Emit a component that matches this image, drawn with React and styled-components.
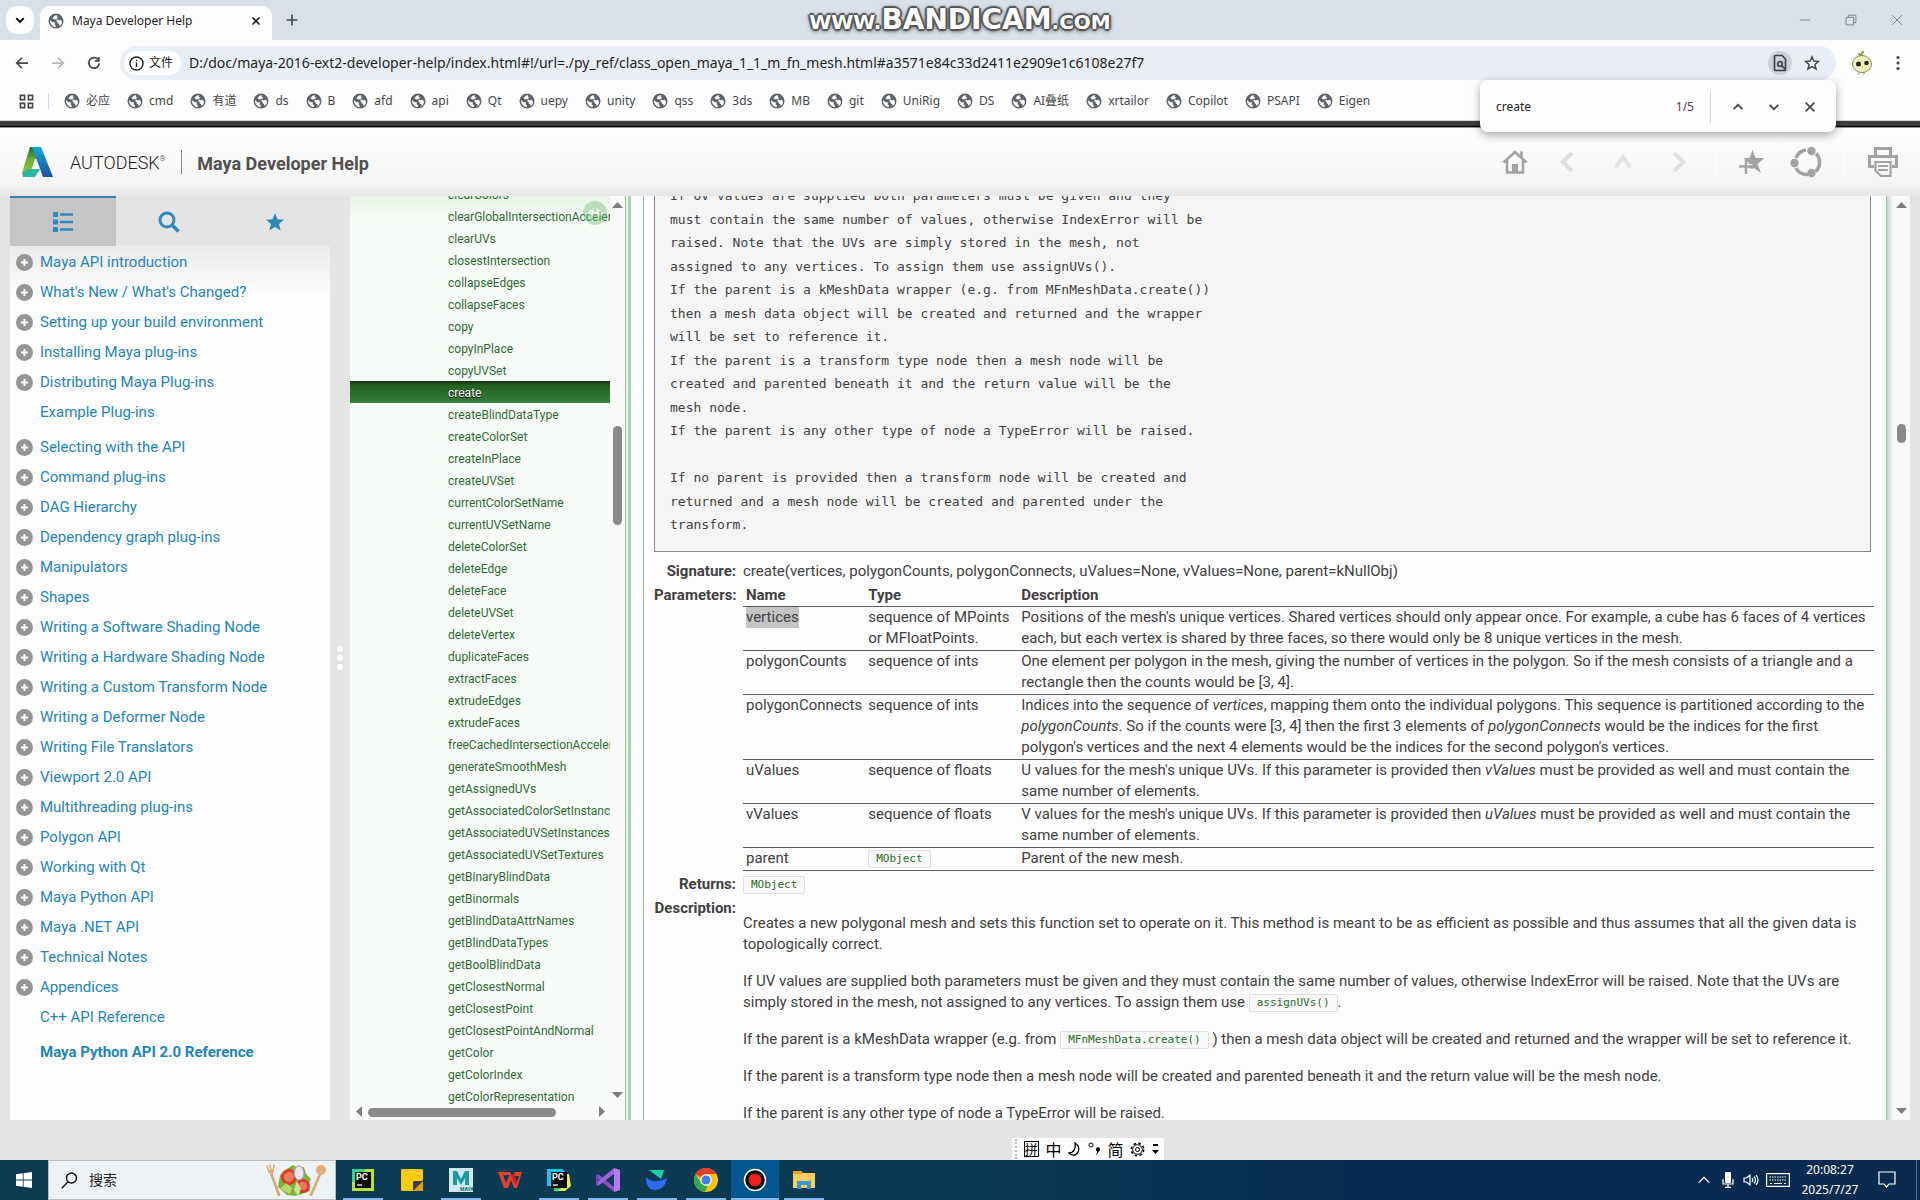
import styled, { createGlobalStyle, css } from "styled-components";

const ui = `"Noto Sans", "Noto Sans CJK SC", sans-serif`;
const mono = `"DejaVu Sans Mono", monospace`;

const GlobalStyle = createGlobalStyle`
  * { box-sizing: border-box; }
  body {
    margin: 0;
    font-family: Roboto, "Noto Sans CJK SC", sans-serif;
    background: #e4e4e4;
  }
  button { border: 0; padding: 0; background: none; font: inherit; color: inherit; cursor: pointer; }
  a { text-decoration: none; color: inherit; }
  svg { display: block; }
`;

const Screen = styled.div`
  height: 100vh;
  display: flex;
  flex-direction: column;
  overflow: hidden;
`;

/* ---------- browser chrome ---------- */

const TabStrip = styled.div`
  height: 40px;
  flex-shrink: 0;
  display: flex;
  align-items: flex-end;
  padding-left: 6px;
  background: #dae0e9;
  position: relative;
`;

const TabSearch = styled.button`
  width: 28px;
  height: 28px;
  margin: 0 6px 6px 0;
  border-radius: 10px;
  background: #fdfdfd;
  display: flex;
  align-items: center;
  justify-content: center;
`;

const Tab = styled.div`
  width: 232px;
  height: 34px;
  padding: 0 8px 4px;
  border-radius: 10px 10px 0 0;
  background: #fdfdfd;
  display: flex;
  align-items: center;
  gap: 8px;
  font: 12px/20px ${ui};
  color: #1f1f1f;

  span { flex: 1; }
`;

const IconButton = styled.button`
  width: ${(p) => p.$w || 24}px;
  height: ${(p) => p.$h || 24}px;
  flex-shrink: 0;
  display: flex;
  align-items: center;
  justify-content: center;
  border-radius: 12px;
  color: ${(p) => p.$color || "#45484b"};
  background: ${(p) => p.$bg || "transparent"};
`;

const NewTab = styled(IconButton)`
  margin: 0 0 8px 8px;
`;

const WindowControls = styled.div`
  margin-left: auto;
  display: flex;
  height: 40px;
  align-items: center;
`;

const Watermark = styled.div`
  position: absolute;
  left: 50%;
  top: 3px;
  transform: translateX(-50%);
  font: bold 28px/34px "DejaVu Sans", sans-serif;
  color: #fff;
  white-space: nowrap;
  text-shadow: -2px 0 1px #555, 2px 0 1px #555, 0 -2px 1px #555, 0 2px 1px #555,
    -1px -1px 1px #555, 1px 1px 1px #555, 0 0 4px #666, 0 2px 5px #666;

  small { font-size: 20px; text-transform: uppercase; }
`;

const Toolbar = styled.div`
  height: 40px;
  flex-shrink: 0;
  display: flex;
  align-items: center;
  padding: 6px 10px 0;
  background: #fdfdfd;
`;

const NavButtons = styled.div`
  display: flex;
  gap: 12px;
  width: 110px;
`;

const Omnibox = styled.div`
  flex: 1;
  height: 34px;
  display: flex;
  align-items: center;
  gap: 8px;
  padding: 0 12px 0 4px;
  border-radius: 17px;
  background: #e9eef6;
`;

const SchemeChip = styled.button`
  height: 24px;
  display: flex;
  align-items: center;
  gap: 5px;
  padding: 0 8px 0 5px;
  border-radius: 12px;
  background: #fdfdfd;
  font: 12px/20px ${ui};
  color: #1f1f1f;
`;

const UrlInput = styled.input`
  flex: 1;
  min-width: 0;
  border: 0;
  outline: 0;
  padding: 0;
  background: transparent;
  font: 14px/24px ${ui};
  color: #1f1f1f;
`;

const ProfileArea = styled.div`
  display: flex;
  align-items: center;
  gap: 12px;
  padding-left: 14px;
`;

const BookmarkBar = styled.nav`
  height: 41px;
  flex-shrink: 0;
  display: flex;
  align-items: center;
  padding: 2px 0 0 19px;
  border-bottom: 1px solid #d5d5d5;
  background: #fdfdfd;
`;

const Separator = styled.i`
  width: ${(p) => p.$w || 1}px;
  height: ${(p) => p.$h}px;
  background: ${(p) => p.$color};
`;

const BookmarkList = styled.div`
  display: flex;
  gap: 17px;
  padding-left: 15px;
`;

const Bookmark = styled.a`
  display: flex;
  align-items: center;
  gap: 6px;
  font: 12px/20px ${ui};
  color: #45484b;
  white-space: nowrap;
`;

const FindBar = styled.form`
  position: absolute;
  z-index: 5;
  top: 80px;
  right: 84px;
  width: 356px;
  height: 52px;
  padding: 2px 14px 0 16px;
  display: flex;
  align-items: center;
  border-radius: 8px;
  background: #fdfdfd;
  box-shadow: 0 3px 10px rgba(0, 0, 0, 0.35);
  font: 12px/20px ${ui};
  color: #45484b;

  input { flex: 1; min-width: 0; border: 0; outline: 0; padding: 0; font: inherit; color: #1f1f1f; background: none; }
  output { margin-right: 16px; }
  i { margin-right: 15px; }
  button + button { margin-left: 12px; }
`;

/* ---------- help site ---------- */

const SiteHeader = styled.header`
  height: 75px;
  flex-shrink: 0;
  display: flex;
  align-items: center;
  padding: 2px 21px 0 20px;
  border-top: 5px solid #3c3c3c;
  box-shadow: inset 0 1px 0 #000, inset 0 2px 0 #999;
  background: linear-gradient(#fdfdfd 20%, #f4f4f4 85%, #e6e6e6);
`;

const Brand = styled.span`
  padding: 0 16px;
  font-size: 18px;
  font-weight: 300;
  color: #222;

  sup { font-size: 7px; vertical-align: 8px; line-height: 0; }
`;

const SiteTitle = styled.h1`
  margin: 0 auto 0 15px;
  padding-top: 3px;
  font-size: 18px;
  line-height: 24px;
  font-weight: 700;
  color: #505050;
`;

const HeaderTools = styled.div`
  display: flex;
  align-items: center;
  color: #a2a2a2;
`;

const Workspace = styled.main`
  flex: 1;
  min-height: 0;
  display: flex;
  padding: 0 10px 40px;
  background: #e4e4e4;
`;

const Sidebar = styled.aside`
  width: 320px;
  flex-shrink: 0;
  display: flex;
  flex-direction: column;
`;

const SideTabs = styled.div`
  height: 50px;
  flex-shrink: 0;
  display: flex;
`;

const SideTab = styled.button`
  width: 106px;
  border-top: 2px solid transparent;
  display: flex;
  align-items: center;
  justify-content: center;
  color: #2e88ba;
  ${(p) =>
    p.$active &&
    css`
      background: #c5c5c5;
      border-color: #3a7da6;
    `}
`;

const Toc = styled.ul`
  flex: 1;
  margin: 0;
  padding: 1px 0 0 6px;
  list-style: none;
  background: linear-gradient(#ebebeb, #fdfdfd 50px);
`;

const TocItem = styled.li`
  height: 30px;
  margin-bottom: ${(p) => (p.$leaf ? 5 : 0)}px;
  padding-left: ${(p) => (p.$leaf ? 24 : 0)}px;
  display: flex;
  align-items: center;
  gap: 7px;
  font-size: 15px;
  font-weight: ${(p) => (p.$bold ? 700 : 400)};
  color: #1f85bb;
`;

const Splitter = styled.div`
  width: 20px;
  flex-shrink: 0;
  display: flex;
  flex-direction: column;
  align-items: center;
  justify-content: center;
  gap: 3px;

  i { width: 6px; height: 6px; border-radius: 3px; background: #fff; }
`;

const NavPane = styled.nav`
  width: 275px;
  flex-shrink: 0;
  display: grid;
  grid-template: minmax(0, 1fr) 16px / minmax(0, 1fr) 15px;
  background: #fafafa;
  position: relative;
`;

const NavList = styled.ul`
  margin: 0;
  padding: 0;
  list-style: none;
  overflow: hidden;
  background: linear-gradient(#e6f4e6, #f7fbf7 24px);

  li:first-child { margin-top: -13px; }
`;

const NavItem = styled.li`
  height: 22px;
  padding-left: 98px;
  font-size: 12px;
  line-height: 24px;
  white-space: nowrap;
  color: #2f6b34;
  ${(p) =>
    p.$active &&
    css`
      color: #fff;
      text-shadow: 0 1px 1px #000;
      background: linear-gradient(#12380f, #255f22 20%, #34803a);
    `}
`;

const SyncButton = styled.button`
  position: absolute;
  top: 5px;
  right: 18px;
  opacity: 0.4;
`;

const Track = styled.div`
  min-width: ${(p) => p.$width || 15}px;
  display: flex;
  flex-direction: ${(p) => (p.$horizontal ? "row" : "column")};
  align-items: center;
  justify-content: space-between;
  padding: ${(p) => (p.$horizontal ? "0 3px" : "3px 0")};
  background: #fafafa;
`;

const Rail = styled.div`
  flex: 1;
  align-self: stretch;
  display: flex;
  flex-direction: ${(p) => (p.$horizontal ? "row" : "column")};
  align-items: center;
  padding: ${(p) => (p.$horizontal ? `0 0 0 ${p.$start}px` : `${p.$start}px 0 0`)};

  i {
    width: ${(p) => (p.$horizontal ? p.$size : 9)}px;
    height: ${(p) => (p.$horizontal ? 9 : p.$size)}px;
    border-radius: 5px;
    background: #8a8a8a;
  }
`;

const GreenSplit = styled.div`
  width: 6px;
  flex-shrink: 0;
  border-left: 1px solid #8fc492;
  background: linear-gradient(90deg, #eaf7ea 30%, #8ecf93 60%, #b5e0b8);
`;

const DocFrame = styled.div`
  flex: 1;
  min-width: 0;
  display: flex;
  padding-left: 12px;
  background: #fdfdfd;
`;

const Doc = styled.article`
  flex: 1;
  min-width: 0;
  overflow: hidden;
  padding: 0 12px 0 10px;
  border: solid #9cc59f;
  border-width: 0 1px;
  font-size: 15px;
  line-height: 21px;
  color: #414141;
`;

const Edge = styled.div`
  width: 6px;
  background: linear-gradient(90deg, #cfd6d0, #f5f5f5);
`;

const CodeBlock = styled.pre`
  margin: -12px 3px 9px 0;
  padding: 0 15px 14px;
  border: 1px solid #858585;
  border-top: 0;
  background: #f5f5f5;
  font: 13px/23px ${mono};

  /* rows alternate 24 and 23 to keep a rhythm of 47 for each pair */
  span { display: block; height: 23px; }
  span:nth-child(odd) { height: 24px; }
`;

const Fields = styled.dl`
  margin: 0;
  display: grid;
  grid-template-columns: 82px minmax(0, 1fr);
  gap: 3px 7px;

  dt { font-weight: 700; text-align: right; }
  dd { margin: 0; }
  p { margin: 15px 10px 0 0; }
  p + p { margin-top: 16px; }
`;

const ParamTable = styled.table`
  width: 100%;
  border-collapse: collapse;
  text-align: left;

  th, td { padding: 0 3px; vertical-align: top; border-bottom: 1px solid #5c5c5c; }
  td { padding-bottom: 1px; }
  th:first-child { width: 122px; }
  th:nth-child(2) { width: 153px; }
  mark { display: inline-block; background: #c4c4c4; color: inherit; }
`;

const Chip = styled.code`
  display: inline-block;
  height: 18px;
  padding: 0 7px;
  border: 1px solid #dfdfdf;
  border-radius: 2px;
  background: #f8f8f8;
  font: 11px/16px ${mono};
  color: #2b6c2e;
  vertical-align: middle;
`;

/* ---------- desktop ---------- */

const ImeBar = styled.div`
  position: absolute;
  left: 1012px;
  bottom: 40px;
  height: 22px;
  width: 152px;
  display: flex;
  align-items: center;
  justify-content: space-between;
  padding: 0 5px 0 3px;
  background: #fdfdfd;
  font: 16px/20px "Noto Sans CJK SC", sans-serif;
  color: #000;

  b { font-size: 13px; font-weight: 400; line-height: 14px; border: 1px solid #000; }
`;

const Grip = styled.i`
  height: 20px;
  border-left: 2px dotted #bbb;
`;

const Taskbar = styled.footer`
  height: 40px;
  flex-shrink: 0;
  display: flex;
  background: linear-gradient(90deg, #0d3b54 0%, #0b3852 50%, #052950 75%, #0a2b50);
  color: #fff;
`;

const StartButton = styled.button`
  width: 48px;
  display: flex;
  align-items: center;
  justify-content: center;
`;

const SearchBox = styled.label`
  width: 288px;
  display: flex;
  align-items: center;
  padding: 0 8px 0 12px;
  border: 1px solid #b9bcbe;
  background: #eff2f4;

  input {
    flex: 1;
    min-width: 0;
    border: 0;
    outline: 0;
    padding: 0 0 0 11px;
    background: none;
    font: 14px/20px ${ui};
  }
  input::placeholder { color: #222; opacity: 1; }
`;

const Apps = styled.div`
  display: flex;
  gap: 1px;
  padding-left: 3px;
`;

const AppButton = styled.button`
  width: 48px;
  display: flex;
  align-items: center;
  justify-content: center;
  background:
    ${(p) => (p.$running ? `linear-gradient(#83b9ea, #83b9ea) center bottom / ${p.$active ? 48 : 40}px 2px no-repeat` : "none")}
    ${(p) => (p.$active ? "#045690" : "transparent")};
`;

const Tray = styled.div`
  margin-left: auto;
  display: flex;
  align-items: center;
  padding-right: 3px;
`;

const Clock = styled.time`
  width: 74px;
  margin-right: 4px;
  font: 12px/20px ${ui};
  text-align: center;

  span { display: block; }
`;

const Globe = ({ size = 16 }) => (
  <svg width={size} height={size} viewBox="0 0 16 16">
    <circle cx="8" cy="8" r="7.5" fill="#5f6368" />
    <path fill="#fdfdfd" d="M8.800 2 6.200 3 4.500 5.200l2 1.200 2.300-.5 1.500-1.500-1.400-.4ZM2 7.200l2.700 2 2.100.1v2.300l1 .7v1.700C4.500 14 1.900 11 2 7.200Zm6.900-.9 1.900.9 1.700-.5 1.500 1.700c0 2-1 3.600-2.500 4.600l-.2-2-1.600-.5V9.300L8.300 8.200Z" />
  </svg>
);

const Stroke = ({ d, size = 16, w = 1.8, view = 16 }) => (
  <svg width={size} height={size} viewBox={`0 0 ${view} ${view}`} fill="none" stroke="currentColor" strokeWidth={w}>
    <path d={d} />
  </svg>
);

const Triangle = ({ dir }) => {
  const paths = { up: "M0 9 5.500 3 11 9Z", down: "M0 3 5.500 9 11 3Z", left: "M3 5.500 9 0V11Z", right: "M9 5.500 3 0V11Z" };
  return (
    <svg width="11" height="12" viewBox="0 0 11 12" fill="#7d7d7d">
      <path d={paths[dir]} />
    </svg>
  );
};

const Scrollbar = ({ horizontal, start, size, width }) => (
  <Track $horizontal={horizontal} $width={width}>
    <Triangle dir={horizontal ? "left" : "up"} />
    <Rail $horizontal={horizontal} $start={start} $size={size}>
      <i />
    </Rail>
    <Triangle dir={horizontal ? "right" : "down"} />
  </Track>
);

const Plus = () => (
  <svg width="17" height="17" viewBox="0 0 17 17">
    <circle cx="8.500" cy="8.500" r="8.500" fill="#959595" />
    <path d="M8.500 5v7M5 8.500h7" stroke="#fff" strokeWidth="2" />
  </svg>
);

const bookmarks = [
  "必应", "cmd", "有道", "ds", "B", "afd", "api", "Qt", "uepy", "unity", "qss", "3ds", "MB", "git",
  "UniRig", "DS", "AI叠纸", "xrtailor", "Copilot", "PSAPI", "Eigen",
];

const toc = [
  "Maya API introduction", "What's New / What's Changed?", "Setting up your build environment",
  "Installing Maya plug-ins", "Distributing Maya Plug-ins", "Example Plug-ins", "Selecting with the API",
  "Command plug-ins", "DAG Hierarchy", "Dependency graph plug-ins", "Manipulators", "Shapes",
  "Writing a Software Shading Node", "Writing a Hardware Shading Node", "Writing a Custom Transform Node",
  "Writing a Deformer Node", "Writing File Translators", "Viewport 2.0 API", "Multithreading plug-ins",
  "Polygon API", "Working with Qt", "Maya Python API", "Maya .NET API", "Technical Notes", "Appendices",
];

const members = [
  "clearColors", "clearGlobalIntersectionAcceleratorInfo", "clearUVs", "closestIntersection", "collapseEdges",
  "collapseFaces", "copy", "copyInPlace", "copyUVSet", "create", "createBlindDataType", "createColorSet",
  "createInPlace", "createUVSet", "currentColorSetName", "currentUVSetName", "deleteColorSet", "deleteEdge",
  "deleteFace", "deleteUVSet", "deleteVertex", "duplicateFaces", "extractFaces", "extrudeEdges", "extrudeFaces",
  "freeCachedIntersectionAccelerator", "generateSmoothMesh", "getAssignedUVs", "getAssociatedColorSetInstances",
  "getAssociatedUVSetInstances", "getAssociatedUVSetTextures", "getBinaryBlindData", "getBinormals",
  "getBlindDataAttrNames", "getBlindDataTypes", "getBoolBlindData", "getClosestNormal", "getClosestPoint",
  "getClosestPointAndNormal", "getColor", "getColorIndex", "getColorRepresentation",
];

const docLines = [
  "If UV values are supplied both parameters must be given and they",
  "must contain the same number of values, otherwise IndexError will be",
  "raised. Note that the UVs are simply stored in the mesh, not",
  "assigned to any vertices. To assign them use assignUVs().",
  "If the parent is a kMeshData wrapper (e.g. from MFnMeshData.create())",
  "then a mesh data object will be created and returned and the wrapper",
  "will be set to reference it.",
  "If the parent is a transform type node then a mesh node will be",
  "created and parented beneath it and the return value will be the",
  "mesh node.",
  "If the parent is any other type of node a TypeError will be raised.",
  "",
  "If no parent is provided then a transform node will be created and",
  "returned and a mesh node will be created and parented under the",
  "transform.",
];

const params = [
  [<mark>vertices</mark>, "sequence of MPoints or MFloatPoints.", "Positions of the mesh's unique vertices. Shared vertices should only appear once. For example, a cube has 6 faces of 4 vertices each, but each vertex is shared by three faces, so there would only be 8 unique vertices in the mesh."],
  ["polygonCounts", "sequence of ints", "One element per polygon in the mesh, giving the number of vertices in the polygon. So if the mesh consists of a triangle and a rectangle then the counts would be [3, 4]."],
  ["polygonConnects", "sequence of ints", <>Indices into the sequence of <em>vertices</em>, mapping them onto the individual polygons. This sequence is partitioned according to the <em>polygonCounts</em>. So if the counts were [3, 4] then the first 3 elements of <em>polygonConnects</em> would be the indices for the first polygon's vertices and the next 4 elements would be the indices for the second polygon's vertices.</>],
  ["uValues", "sequence of floats", <>U values for the mesh's unique UVs. If this parameter is provided then <em>vValues</em> must be provided as well and must contain the same number of elements.</>],
  ["vValues", "sequence of floats", <>V values for the mesh's unique UVs. If this parameter is provided then <em>uValues</em> must be provided as well and must contain the same number of elements.</>],
  ["parent", <Chip>MObject</Chip>, "Parent of the new mesh."],
];

const Browser = () => (
  <>
    <TabStrip>
      <TabSearch aria-label="Search tabs">
        <Stroke size={12} d="M3 5.500 8 10.500 13 5.500" w={2.4} />
      </TabSearch>
      <Tab>
        <Globe />
        <span>Maya Developer Help</span>
        <IconButton $w={16} $h={16} $color="#222" aria-label="Close tab">
          <Stroke size={14} d="M4 4 12 12M12 4 4 12" w={2} />
        </IconButton>
      </Tab>
      <NewTab aria-label="New tab">
        <Stroke d="M8 2.500V13.500M2.500 8H13.500" w={1.7} />
      </NewTab>
      <Watermark>
        <small>www.</small>BANDICAM<small>.com</small>
      </Watermark>
      <WindowControls>
        <IconButton $w={46} $color="#7d8288" aria-label="Minimize"><Stroke size={12} d="M1 8H15" w={1.3} /></IconButton>
        <IconButton $w={46} $color="#7d8288" aria-label="Restore"><Stroke size={12} d="M1.500 4.500h10v10h-10zM4.500 4V1.500h10v10H12" w={1.3} /></IconButton>
        <IconButton $w={46} $color="#7d8288" aria-label="Close"><Stroke size={12} d="M1.500 1.500l13 13M14.500 1.500l-13 13" w={1.3} /></IconButton>
      </WindowControls>
    </TabStrip>
    <Toolbar>
      <NavButtons>
        <IconButton aria-label="Back"><Stroke size={14} d="M15 8H2.500M8 2 2 8l6 6" w={2} /></IconButton>
        <IconButton $color="#b4b6b8" aria-label="Forward"><Stroke size={14} d="M1 8h12.500M8 2l6 6-6 6" w={2} /></IconButton>
        <IconButton aria-label="Reload"><Stroke size={14} d="M13 4.500A6 6 0 1 0 14 8.500M13.500 1v4.500H9" w={2} /></IconButton>
      </NavButtons>
      <Omnibox>
        <SchemeChip>
          <svg width="15" height="15" viewBox="0 0 16 16" fill="none" stroke="#222" strokeWidth="1.500">
            <circle cx="8" cy="8" r="7" />
            <path d="M8 7v5M8 4v1.600" />
          </svg>
          文件
        </SchemeChip>
        <UrlInput
          aria-label="Address"
          defaultValue="D:/doc/maya-2016-ext2-developer-help/index.html#!/url=./py_ref/class_open_maya_1_1_m_fn_mesh.html#a3571e84c33d2411e2909e1c6108e27f7"
        />
        <IconButton $bg="#cdd2da" aria-label="Find in page">
          <svg width="16" height="18" viewBox="0 0 16 18" fill="none" stroke="#3c4043" strokeWidth="1.700">
            <path d="M10 1.500H3.500a1 1 0 0 0-1 1v13a1 1 0 0 0 1 1h9a1 1 0 0 0 1-1V5Z" />
            <circle cx="8" cy="10" r="2.300" />
            <path d="m9.500 11.500 3.500 3.500" />
          </svg>
        </IconButton>
        <IconButton aria-label="Bookmark this page">
          <Stroke d="M8 1.800l1.800 4.300 4.600.4-3.500 3 1.100 4.500L8 11.600 4 14l1.100-4.500-3.500-3 4.600-.4Z" w={1.5} />
        </IconButton>
      </Omnibox>
      <ProfileArea>
        <IconButton aria-label="Profile">
          <svg width="22" height="24" viewBox="0 0 22 24">
            <path d="M11 5c-1-3 0-4 2-4M11 4c-2 0-3-1-3-2" stroke="#6d8a35" strokeWidth="1.400" fill="none" />
            <ellipse cx="11" cy="13" rx="9.500" ry="8.500" fill="#f0efb5" stroke="#8c8a68" />
            <path d="M8 21v2.500M13 21v2.500" stroke="#8c8a68" />
            <circle cx="7.500" cy="13" r="2.500" fill="#2c241c" />
            <circle cx="15.500" cy="12" r="2.300" fill="#2c241c" />
            <path d="m11 15 1.500 0-.7 2Z" fill="#d99b3e" />
          </svg>
        </IconButton>
        <IconButton aria-label="Menu">
          <svg width="4" height="16" viewBox="0 0 4 16" fill="#45484b">
            <circle cx="2" cy="2.500" r="1.600" /><circle cx="2" cy="8" r="1.600" /><circle cx="2" cy="13.500" r="1.600" />
          </svg>
        </IconButton>
      </ProfileArea>
    </Toolbar>
    <BookmarkBar>
      <IconButton $w={15} $h={16} aria-label="Apps">
        <Stroke size={15} d="M1.500 1.500h4.500v4.500h-4.500zM10 1.500h4.500v4.500H10zM1.500 10h4.500v4.500h-4.500zM10 10h4.500v4.500H10z" w={1.7} />
      </IconButton>
      <Separator $h={16} $w={14} $color="transparent" />
      <Separator $h={16} $color="#c5daf5" />
      <BookmarkList>
        {bookmarks.map((name) => (
          <Bookmark href="#" key={name}>
            <Globe />
            {name}
          </Bookmark>
        ))}
      </BookmarkList>
    </BookmarkBar>
    <FindBar>
      <input aria-label="Find in page" defaultValue="create" />
      <output>1/5</output>
      <Separator $h={32} $color="#c5daf5" />
      <IconButton type="button" aria-label="Previous"><Stroke size={14} d="M3 10.500l5-5 5 5" w={2} /></IconButton>
      <IconButton type="button" aria-label="Next"><Stroke size={14} d="M3 5.500l5 5 5-5" w={2} /></IconButton>
      <IconButton type="button" aria-label="Close find bar"><Stroke size={14} d="M3 3l10 10M13 3 3 13" w={2} /></IconButton>
    </FindBar>
  </>
);

const Header = () => (
  <SiteHeader>
    <svg width="34" height="32" viewBox="0 0 34 32">
      <defs>
        <linearGradient id="leg" x1="0" y1="0" x2="0" y2="1">
          <stop offset="0" stopColor="#156b36" /><stop offset=".5" stopColor="#6fae3d" /><stop offset="1" stopColor="#8cc540" />
        </linearGradient>
        <linearGradient id="side" x1="0" y1="0" x2="0" y2="1">
          <stop offset="0" stopColor="#12a5e0" /><stop offset="1" stopColor="#1c4fa0" />
        </linearGradient>
      </defs>
      <path d="M10 1h7l3 10-5 2-5 14-8 0Z" fill="url(#leg)" />
      <path d="M2 27 8 23h12l-5 8H3Z" fill="#2bb5a0" />
      <path d="M12 1h9l12 30H23Z" fill="url(#side)" />
    </svg>
    <Brand>AUTODESK<sup>®</sup></Brand>
    <Separator $h={24} $color="#888" />
    <SiteTitle>Maya Developer Help</SiteTitle>
    <HeaderTools>
      <IconButton $w={48} $h={32} $color="#a2a2a2" aria-label="Home">
        <svg width="26" height="24" viewBox="0 0 26 24" fill="none" stroke="currentColor" strokeWidth="2.600">
          <path d="M1.500 12.500 13 2l11.500 10.500M5 10v12.500h16V10M19.500 1.500v6" />
          <path d="M10 14h6v8h-6z" fill="currentColor" stroke="none" />
        </svg>
      </IconButton>
      <IconButton $w={56} $h={32} $color="#dfdfdf" aria-label="Previous topic"><Stroke size={22} d="M11.500 1.500 5 8l6.500 6.500" w={3} /></IconButton>
      <IconButton $w={56} $h={32} $color="#e2e2e2" aria-label="Parent topic"><Stroke size={20} d="M2 12.500 8 4l6 8.500" w={3} /></IconButton>
      <IconButton $w={56} $h={32} $color="#dfdfdf" aria-label="Next topic"><Stroke size={22} d="M4.500 1.500 11 8l-6.500 6.500" w={3} /></IconButton>
      <Separator $h={28} $w={8} $color="transparent" />
      <Separator $h={28} $color="#fff" />
      <Separator $h={28} $w={9} $color="transparent" />
      <IconButton $w={54} $h={32} $color="#a2a2a2" aria-label="Add to favorites">
        <svg width="26" height="26" viewBox="0 0 26 26" fill="currentColor">
          <path d="m13.500 1 3 8h9l-7 6 3.500 9-6.500-4.500h-5V15H8L5 9h5.500Z" />
          <path d="M0 17.500h14M7 11v14" stroke="currentColor" strokeWidth="2.500" />
          <path d="M9 12.500v3h4.500" stroke="#f6f6f6" strokeWidth="1.200" fill="none" />
        </svg>
      </IconButton>
      <IconButton $w={54} $h={32} $color="#a2a2a2" aria-label="Share">
        <svg width="32" height="32" viewBox="0 0 32 32" fill="none" stroke="currentColor">
          <path d="M6 12A12.500 12.500 0 0 1 16 4M26 7.500A12.500 12.500 0 0 1 25.500 25.500M18 28.500A12.500 12.500 0 0 1 6 22" strokeWidth="3.600" />
          <g fill="currentColor" stroke="none">
            <circle cx="4.500" cy="17" r="4.200" /><circle cx="21.500" cy="5" r="4.200" /><circle cx="21.500" cy="27" r="4.200" />
          </g>
        </svg>
      </IconButton>
      <Separator $h={28} $w={11} $color="transparent" />
      <Separator $h={28} $color="#fff" />
      <Separator $h={28} $w={22} $color="transparent" />
      <IconButton $w={32} $h={32} $color="#a2a2a2" aria-label="Print">
        <svg width="30" height="32" viewBox="0 0 30 32" fill="none" stroke="currentColor" strokeWidth="3">
          <path d="M7.500 9V2.500h15V9" />
          <path d="M6 20.500H1.500V10.500h27v10H24" />
          <path d="M7.500 16h15v14H13l-5.500-5.500Z" strokeWidth="2.200" />
          <path d="M10 20h10M10 24h10" strokeWidth="1.800" />
        </svg>
      </IconButton>
    </HeaderTools>
  </SiteHeader>
);

const Contents = () => (
  <Sidebar>
    <SideTabs>
      <SideTab $active aria-label="Contents">
        <svg width="20" height="20" viewBox="0 0 20 20" fill="currentColor">
          <path d="M0 0h5v5H0zM0 7.500h5v5H0zM0 15h5v5H0zM7 1.300h13v2.400H7zM7 8.800h13v2.400H7zM7 16.300h13v2.400H7z" />
        </svg>
      </SideTab>
      <SideTab aria-label="Search">
        <svg width="22" height="22" viewBox="0 0 22 22" fill="none" stroke="currentColor">
          <circle cx="9" cy="9" r="7" strokeWidth="3" />
          <path d="m14 14 6.500 6.500" strokeWidth="3.600" />
        </svg>
      </SideTab>
      <SideTab aria-label="Favorites">
        <svg width="18" height="18" viewBox="0 0 18 18" fill="currentColor">
          <path d="m9 0 2.500 6.200 6.500.5-5 4.200 1.700 6.600L9 13.900l-5.700 3.600L5 10.900 0 6.700l6.500-.5Z" />
        </svg>
      </SideTab>
    </SideTabs>
    <Toc>
      {toc.map((label) => {
        const leaf = label === "Example Plug-ins";
        return (
          <TocItem key={label} $leaf={leaf}>
            {!leaf && <button aria-label={`Expand ${label}`}><Plus /></button>}
            <a href="#">{label}</a>
          </TocItem>
        );
      })}
      <TocItem $leaf><a href="#">C++ API Reference</a></TocItem>
      <TocItem $leaf $bold><a href="#">Maya Python API 2.0 Reference</a></TocItem>
    </Toc>
  </Sidebar>
);

const Members = () => (
  <NavPane>
    <NavList>
      {members.map((name) => (
        <NavItem key={name} $active={name === "create"}>
          <a href="#">{name}</a>
        </NavItem>
      ))}
    </NavList>
    <Scrollbar start={215} size={99} />
    <Scrollbar horizontal start={4} size={188} />
    <div />
    <SyncButton aria-label="Toggle sync">
      <svg width="24" height="24" viewBox="0 0 24 24">
        <circle cx="12" cy="12" r="12" fill="#6dbb70" />
        <path d="m4 12 6-5v3.500h4V7l6 5-6 5v-3.500h-4V17Z" fill="#fff" />
      </svg>
    </SyncButton>
  </NavPane>
);

const Reference = () => (
  <DocFrame>
    <Doc>
      <CodeBlock>
        {docLines.map((line, i) => (
          <span key={i}>{line}</span>
        ))}
      </CodeBlock>
      <Fields>
        <dt>Signature:</dt>
        <dd>create(vertices, polygonCounts, polygonConnects, uValues=None, vValues=None, parent=kNullObj)</dd>
        <dt>Parameters:</dt>
        <dd>
          <ParamTable>
            <thead>
              <tr><th>Name</th><th>Type</th><th>Description</th></tr>
            </thead>
            <tbody>
              {params.map(([name, type, text], i) => (
                <tr key={i}><td>{name}</td><td>{type}</td><td>{text}</td></tr>
              ))}
            </tbody>
          </ParamTable>
        </dd>
        <dt>Returns:</dt>
        <dd><Chip>MObject</Chip></dd>
        <dt>Description:</dt>
        <dd>
          <p>Creates a new polygonal mesh and sets this function set to operate on it. This method is meant to be as efficient as possible and thus assumes that all the given data is topologically correct.</p>
          <p>If UV values are supplied both parameters must be given and they must contain the same number of values, otherwise IndexError will be raised. Note that the UVs are simply stored in the mesh, not assigned to any vertices. To assign them use <Chip>assignUVs()</Chip>.</p>
          <p>If the parent is a kMeshData wrapper (e.g. from <Chip>MFnMeshData.create()</Chip> ) then a mesh data object will be created and returned and the wrapper will be set to reference it.</p>
          <p>If the parent is a transform type node then a mesh node will be created and parented beneath it and the return value will be the mesh node.</p>
          <p>If the parent is any other type of node a TypeError will be raised.</p>
        </dd>
      </Fields>
    </Doc>
    <Edge />
    <Scrollbar start={213} size={19} width={17} />
  </DocFrame>
);

const apps = [
  ["PyCharm Community", true, (
    <svg width="22" height="22" viewBox="0 0 22 22"><rect width="22" height="22" fill="#b6e334" /><path d="M0 0h14L0 14Z" fill="#35d38c" /><rect x="3" y="3" width="16" height="16" fill="#0a0a0a" /><text x="4" y="11" fontSize="9" fontWeight="700" fontFamily="Roboto" fill="#fff">PC</text><path d="M5 16h5" stroke="#fff" strokeWidth="1.300" /></svg>
  )],
  ["Sticky Notes", false, (
    <svg width="22" height="22" viewBox="0 0 22 22"><path d="M1 0h20l1 1v10L12 22H1l-1-1V1Z" fill="#fccb10" /><path d="M12 22V13l1-1h9v10Z" fill="#3b3d42" /><path d="M12 22 22 12v10Z" fill="#d9a200" /></svg>
  )],
  ["Maya", true, (
    <svg width="24" height="24" viewBox="0 0 24 24"><rect width="24" height="24" fill="#cfe9ec" /><path d="M4 17V3h4l4 8 4-8h4v14h-4v-7l-4 7-4-7v7Z" fill="#1b9aa5" /><text x="11" y="23" fontSize="5" fontWeight="700" fontFamily="Roboto" fill="#0e6f7a">MAYA</text></svg>
  )],
  ["WPS Office", false, (
    <svg width="24" height="16" viewBox="0 0 24 16"><path d="M0 0h12l2 3H5l3 8 4-9h4l3 8 2-6h-4l-1-4h8l-5 16h-3l-3-8-3 8H6Z" fill="#e8402c" /><path d="M12 2h4l3 8-1 3Z" fill="#b82c1c" /></svg>
  )],
  ["PyCharm", true, (
    <svg width="24" height="24" viewBox="0 0 24 24"><path d="M0 1h15l4 4-4 13H0Z" fill="#21c3f3" /><path d="M18 6h4l2 12-6 5H7Z" fill="#e9ee4a" /><path d="M2 15l8 9 4-4Z" fill="#22d88f" /><rect x="4" y="4" width="16" height="16" fill="#0a0a0a" /><text x="5" y="12" fontSize="9" fontWeight="700" fontFamily="Roboto" fill="#fff">PC</text><path d="M6 17h5" stroke="#fff" strokeWidth="1.300" /></svg>
  )],
  ["Visual Studio", true, (
    <svg width="24" height="24" viewBox="0 0 24 24"><path d="M18 0 24 2v20l-6 2Z" fill="#b57cf0" /><path d="M0 7l2-1 16 13v5L0 9Z" fill="#8a52c8" /><path d="M0 17l2 1L18 6V0L0 15Z" fill="#a065de" /><path d="M0 7l2-1v12l-2-1Z" fill="#7a44b8" /></svg>
  )],
  ["Thunder", true, (
    <svg width="24" height="22" viewBox="0 0 24 22"><path d="M4 1h15l-3 9Z" fill="#19cfa9" /><path d="M1 8c5 5 11 6 21 1-1 8-6 12-12 12C4 21 1 16 1 8Z" fill="#2e6bf0" /></svg>
  )],
  ["Chrome", true, (
    <svg width="24" height="24" viewBox="0 0 24 24"><circle cx="12" cy="12" r="12" fill="#fbc116" /><path d="M1.600 6A12 12 0 0 1 22.400 6H12a6 6 0 0 0-5.400 3.500Z" fill="#e33b2e" /><path d="M1.600 6 7 15a6 6 0 0 0 6.500 2.800L11 24A12 12 0 0 1 1.600 6Z" fill="#2da94f" /><circle cx="12" cy="12" r="5.800" fill="#fff" /><circle cx="12" cy="12" r="4.500" fill="#3d7fea" /></svg>
  )],
  ["Bandicam", true, (
    <svg width="24" height="24" viewBox="0 0 24 24"><circle cx="12" cy="12" r="10.500" fill="#0a0a0a" stroke="#fff" strokeWidth="1.500" /><circle cx="12" cy="12" r="6.500" fill="#f0201c" /></svg>
  )],
  ["Explorer", true, (
    <svg width="22" height="18" viewBox="0 0 22 18"><path d="M0 0h8l2 2h12v15H0Z" fill="#f9cf5b" /><path d="M0 0h8l2 2-1 1H0Z" fill="#e6a52a" /><path d="M4 18v-8h14v8h-4v-4H8v4Z" fill="#3f92d4" /></svg>
  )],
];

const Salad = () => (
  <svg width="62" height="34" viewBox="0 0 62 34">
    <g stroke="#d9a878" strokeLinecap="round">
      <path d="M6 10 14 32M56 9 46 32" strokeWidth="2.600" />
      <path d="M2 3l2 6M5 2l1 6M9 2 8 8" strokeWidth="1.500" />
    </g>
    <circle cx="56" cy="7" r="5" fill="#dfae80" />
    <path d="M3 7h6l-1 4H5Z" fill="#dfae80" />
    <path d="m13 24 2-12 7-6 6-4 5 3 6-1 2 7 5 5-3 6 2 6-8 3-7 2-8-1Z" fill="#7fb23c" />
    <circle cx="24" cy="14" r="8" fill="#d8402c" /><circle cx="24" cy="14" r="5" fill="#ee7a5c" />
    <circle cx="38" cy="23" r="7" fill="#d8402c" /><circle cx="38" cy="23" r="4" fill="#ee7a5c" />
    <ellipse cx="34" cy="10" rx="5" ry="7" fill="#f1e3ee" stroke="#b386ae" />
    <path d="m15 26 6-6 6 5-2 6Z" fill="#b6d96a" /><path d="m29 27 3-9 4 8-3 7Z" fill="#cfe58e" />
  </svg>
);

const Desktop = () => (
  <Taskbar>
    <StartButton aria-label="Start">
      <svg width="16" height="16" viewBox="0 0 16 16" fill="#fff">
        <path d="M0 2.300 6.800 1.300V7.600H0ZM7.600 1.200 16 0v7.600H7.600ZM0 8.400h6.800v6.300L0 13.700ZM7.600 8.400H16V16l-8.400-1.200Z" />
      </svg>
    </StartButton>
    <SearchBox>
      <svg width="17" height="17" viewBox="0 0 17 17" fill="none" stroke="#111" strokeWidth="1.400">
        <circle cx="10.500" cy="6" r="5" /><path d="M7 9.800.8 16.200" />
      </svg>
      <input placeholder="搜索" aria-label="搜索" />
      <Salad />
    </SearchBox>
    <Apps>
      {apps.map(([name, running, icon]) => (
        <AppButton key={name} aria-label={name} $running={running} $active={name === "Bandicam"}>
          {icon}
        </AppButton>
      ))}
    </Apps>
    <Tray>
      <IconButton $w={24} $color="#fff" aria-label="Show hidden icons"><Stroke size={14} d="M2 11l6-6 6 6" w={1.6} /></IconButton>
      <IconButton $w={23} aria-label="Microphone">
        <svg width="12" height="16" viewBox="0 0 12 16" fill="#fff"><rect x="3" width="6" height="11" rx="1" /><path d="M1 7v5h10V7M6 12v3M3 15.300h6" stroke="#fff" fill="none" strokeWidth="1.200" /></svg>
      </IconButton>
      <IconButton $w={24} aria-label="Volume">
        <svg width="16" height="14" viewBox="0 0 16 14" fill="none" stroke="#fff" strokeWidth="1.200"><path d="M1 5h2.500L7 2v10L3.500 9H1ZM9 5q1.500 2 0 4M11 3.500q3 3.500 0 7M13 2q4 5 0 10" /></svg>
      </IconButton>
      <IconButton $w={30} aria-label="Keyboard">
        <svg width="24" height="14" viewBox="0 0 24 14" fill="none" stroke="#fff" strokeWidth="1.200"><rect x=".6" y=".6" width="22.800" height="12.800" /><path d="M3.500 4h17M3.500 7h17" strokeDasharray="1.500 1" /><path d="M4 10.500h2M8 10.500h8M18 10.500h2" /></svg>
      </IconButton>
      <Clock>
        <span>20:08:27</span>
        <span>2025/7/27</span>
      </Clock>
      <IconButton $w={32} aria-label="Notifications">
        <svg width="18" height="18" viewBox="0 0 18 18" fill="none" stroke="#fff" strokeWidth="1.200"><path d="M1 1h16v12h-6l-2.500 3L6 13H1Z" /></svg>
      </IconButton>
      <Separator $h={40} $w={13} $color="transparent" />
      <Separator $h={40} $color="#5a7389" />
    </Tray>
  </Taskbar>
);

const App = () => (
  <Screen>
    <GlobalStyle />
    <Browser />
    <Header />
    <Workspace>
      <Contents />
      <Splitter><i /><i /><i /></Splitter>
      <Members />
      <GreenSplit />
      <Reference />
    </Workspace>
    <Desktop />
    <ImeBar>
      <Grip />
      <b>拼</b>
      <span>中</span>
      <svg width="13" height="14" viewBox="0 0 13 14" fill="none" stroke="#000" strokeWidth="1.300"><path d="M7 1c5 3 5 9 0 12-2 .5-4 0-6-2 5 0 7-5 6-10Z" /></svg>
      <svg width="13" height="14" viewBox="0 0 13 14"><circle cx="3" cy="3" r="2" fill="none" stroke="#000" /><path d="M9 5.500a2 2 0 1 1 1.800 4C10 11.500 9 12.500 7.500 13c1-1.200 1.600-2 1.500-3.600-1.500-1-1.500-3 0-3.900Z" /></svg>
      <span>简</span>
      <svg width="15" height="15" viewBox="0 0 15 15" fill="none" stroke="#000"><circle cx="7.500" cy="7.500" r="6.200" strokeWidth="1.600" strokeDasharray="2.600 2.270" /><circle cx="7.500" cy="7.500" r="4.800" /><circle cx="7.500" cy="7.500" r="2" /></svg>
      <svg width="7" height="12" viewBox="0 0 7 12"><path d="M1 1h5v2H1ZM0 7h7l-3.500 4Z" /></svg>
    </ImeBar>
  </Screen>
);

export default App;
